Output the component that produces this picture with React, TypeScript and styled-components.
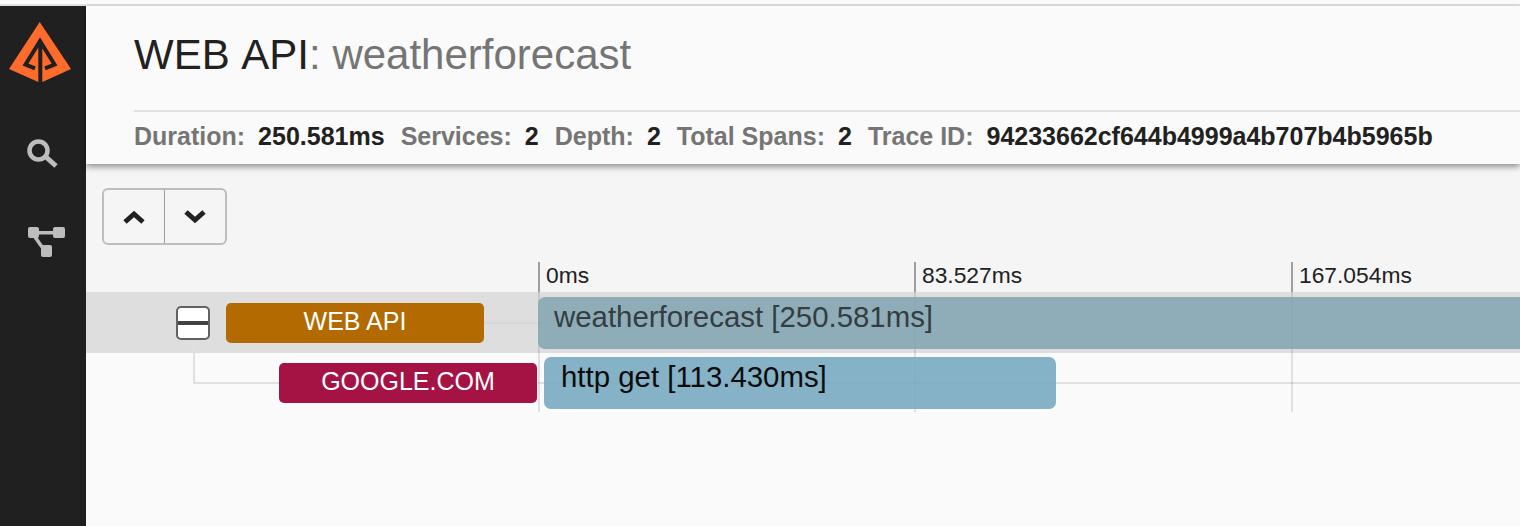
import React from 'react';
import styled, { createGlobalStyle } from 'styled-components';

const GlobalStyle = createGlobalStyle`
  html, body {
    margin: 0;
    padding: 0;
    height: 100%;
    overflow: hidden;
    background: #fafafa;
    font-family: "Liberation Sans", Arial, sans-serif;
  }
  #root {
    height: 100%;
  }
`;

const Page = styled.div`
  height: 526px;
  padding-top: 4px;
  box-sizing: border-box;
  display: flex;
  flex-direction: column;
  overflow: hidden;
`;

const Frame = styled.div`
  flex: 1;
  display: flex;
  min-height: 0;
  border-top: 2px solid #e0e0e0;
`;

const Sidebar = styled.nav`
  width: 86px;
  flex-shrink: 0;
  background: #202020;
  display: flex;
  flex-direction: column;
  align-items: center;
  gap: 46px;
  color: #bdbdbd;
`;

const LogoIcon = styled.svg`
  display: block;
  width: 62px;
  height: 62px;
  margin-top: 16px;
  margin-left: -6px;
`;

const NavIcon = styled.svg`
  display: block;
  width: 44px;
  height: 44px;
`;

const Main = styled.main`
  flex: 1;
  min-width: 0;
  display: flex;
  flex-direction: column;
`;

const Header = styled.header`
  height: 158px;
  box-sizing: border-box;
  padding: 26px 0 0 48px;
  background: #fafafa;
  box-shadow: 0 3px 6px rgba(0, 0, 0, 0.4);
  position: relative;
  z-index: 3;
`;

const Title = styled.h1`
  margin: 0;
  font-size: 42px;
  line-height: 46px;
  font-weight: 400;
  color: #757575;
  white-space: nowrap;
`;

const ServiceName = styled.span`
  color: #212121;
  font-kerning: none;
`;

const Stats = styled.div`
  margin-top: 32px;
  padding-top: 11px;
  border-top: 2px solid #e0e0e0;
  display: flex;
  align-items: baseline;
  font-size: 25px;
  line-height: 26px;
  font-weight: 700;
  white-space: nowrap;
`;

const StatLabel = styled.span`
  color: #757575;
  margin-right: 13px;
`;

const StatValue = styled.span`
  color: #212121;
  margin-right: 16px;
`;

const Content = styled.section`
  background: #f5f5f5;
  padding-top: 24px;
  height: 128px;
  box-sizing: border-box;
  display: flex;
  flex-direction: column;
`;

const ButtonGroup = styled.div`
  margin-left: 16px;
  width: 125px;
  height: 57px;
  box-sizing: border-box;
  display: flex;
  border: 2px solid #bdbdbd;
  border-radius: 6px;
`;

const CollapseButton = styled.button`
  flex: 1;
  padding: 0;
  border: 0;
  background: transparent;
  color: #212121;
  display: flex;
  align-items: center;
  justify-content: center;
  & + & {
    border-left: 1px solid #9e9e9e;
  }
`;

const Chevron = styled.svg`
  width: 22px;
  height: 14px;
  display: block;
`;

const TickRow = styled.div`
  margin-top: 17px;
  height: 30px;
  margin-left: 452px;
  display: grid;
  grid-template-columns: 376px 377px 376px;
`;

const Tick = styled.div`
  border-left: 2px solid #9e9e9e;
  box-sizing: border-box;
  padding-left: 6px;
  font-size: 22.8px;
  line-height: 26px;
  color: #212121;
`;

const Rows = styled.div`
  position: relative;
  flex: 1;
  background: #fafafa;
`;

const GridLines = styled.div`
  position: absolute;
  top: 0;
  left: 452px;
  height: 120px;
  display: grid;
  grid-template-columns: 376px 377px 376px;
  z-index: 1;
  pointer-events: none;
`;

const GridLine = styled.div`
  border-left: 2px solid rgba(0, 0, 0, 0.1);
`;

const Row = styled.div<{ $selected?: boolean; $height: number }>`
  position: relative;
  height: ${({ $height }) => $height}px;
  display: grid;
  grid-template-columns: 452px 1fr;
  background: ${({ $selected }) => ($selected ? '#dedede' : 'transparent')};
`;

const LabelCell = styled.div<{ $pad: number; $top: number }>`
  display: flex;
  align-items: flex-start;
  justify-content: flex-end;
  padding-top: ${({ $top }) => $top}px;
  padding-right: ${({ $pad }) => $pad}px;
`;

const Toggle = styled.div`
  width: 34px;
  height: 34px;
  box-sizing: border-box;
  margin: 3px 16px 0 0;
  border: 2px solid #616161;
  border-radius: 5px;
  background: #fff;
  display: flex;
  align-items: center;
  position: relative;
  z-index: 2;
  &::after {
    content: '';
    display: block;
    width: 100%;
    height: 4px;
    background: #424242;
  }
`;

const ServiceBadge = styled.div<{ $color: string }>`
  width: 258px;
  height: 40px;
  border-radius: 5px;
  background: ${({ $color }) => $color};
  color: #fff;
  font-size: 25px;
  line-height: 37px;
  text-align: center;
  position: relative;
  z-index: 2;
`;

const BarCell = styled.div<{ $left: number; $top: number }>`
  padding-left: ${({ $left }) => $left}px;
  padding-top: ${({ $top }) => $top}px;
  min-width: 0;
  overflow: hidden;
  position: relative;
  z-index: 2;
`;

const SpanBar = styled.div<{ $color: string; $text: string; $open?: boolean; $width?: number }>`
  height: 52px;
  box-sizing: border-box;
  width: ${({ $width }) => ($width ? `${$width}px` : 'auto')};
  padding: 5px 0 0 ${({ $open }) => ($open ? 16 : 17)}px;
  border-radius: ${({ $open }) => ($open ? '7px 0 0 7px' : '7px')};
  background: ${({ $color }) => $color};
  color: ${({ $text }) => $text};
  font-size: 29.4px;
  line-height: 30px;
  white-space: nowrap;
`;

const TreeLine = styled.div`
  position: absolute;
  left: 107px;
  top: -13px;
  width: 86px;
  height: 44px;
  box-sizing: border-box;
  border-left: 2px solid #e0e0e0;
  border-bottom: 2px solid #e0e0e0;
  z-index: 1;
`;

const RowRule = styled.div<{ $top: number; $left: number; $alpha: number }>`
  position: absolute;
  left: ${({ $left }) => $left}px;
  right: 0;
  top: ${({ $top }) => $top}px;
  height: 2px;
  background: rgba(0, 0, 0, ${({ $alpha }) => $alpha});
  z-index: 1;
`;

const stats: [string, string][] = [
  ['Duration:', '250.581ms'],
  ['Services:', '2'],
  ['Depth:', '2'],
  ['Total Spans:', '2'],
  ['Trace ID:', '94233662cf644b4999a4b707b4b5965b'],
];

const ticks = ['0ms', '83.527ms', '167.054ms'];

export default function App() {
  return (
    <Page>
      <GlobalStyle />
      <Frame>
        <Sidebar>
          <LogoIcon viewBox="9 23 62 62">
            <path fill="#ff6b2d" d="M39.7 23 L71 70 L42.3 83 H38.3 L9 70 Z" />
            <path
              fill="none"
              stroke="#202020"
              strokeWidth="4"
              d="M35 69.3 L25.5 65.5 L40 42 L54.5 65.5 L45 69.3 M40.3 44 V85"
            />
          </LogoIcon>
          <NavIcon viewBox="0 0 44 44" fill="none" stroke="currentColor">
            <circle cx="17.5" cy="20.5" r="9" strokeWidth="4.5" />
            <path d="M25 27 L35 36" strokeWidth="5" />
          </NavIcon>
          <NavIcon viewBox="0 0 44 44" fill="currentColor">
            <rect x="7" y="7" width="11" height="11" rx="2" />
            <rect x="32" y="7" width="12" height="11" rx="2" />
            <rect x="20" y="25" width="11" height="12" rx="2" />
            <path d="M18 11 H32 V14.5 H18 Z" />
            <path d="M14 17 L21 27" fill="none" stroke="currentColor" strokeWidth="3.5" />
          </NavIcon>
        </Sidebar>
        <Main>
          <Header>
            <Title>
              <ServiceName>WEB API</ServiceName>: weatherforecast
            </Title>
            <Stats>
              {stats.map(([label, value]) => (
                <React.Fragment key={label}>
                  <StatLabel>{label}</StatLabel>
                  <StatValue>{value}</StatValue>
                </React.Fragment>
              ))}
            </Stats>
          </Header>
          <Content>
            <ButtonGroup>
              <CollapseButton aria-label="Collapse">
                <Chevron viewBox="0 0 22 14" fill="none" stroke="currentColor" strokeWidth="5">
                  <path d="M2 12 L11 4 L20 12" />
                </Chevron>
              </CollapseButton>
              <CollapseButton aria-label="Expand">
                <Chevron viewBox="0 0 22 14" fill="none" stroke="currentColor" strokeWidth="5">
                  <path d="M2 2 L11 10 L20 2" />
                </Chevron>
              </CollapseButton>
            </ButtonGroup>
            <TickRow>
              {ticks.map(t => (
                <Tick key={t}>{t}</Tick>
              ))}
            </TickRow>
          </Content>
          <Rows>
            <GridLines>
              <GridLine />
              <GridLine />
              <GridLine />
            </GridLines>
            <Row $selected $height={61}>
              <RowRule $left={398} $top={30} $alpha={0.03} />
              <LabelCell $pad={54} $top={11}>
                <Toggle />
                <ServiceBadge $color="#b36a00">WEB API</ServiceBadge>
              </LabelCell>
              <BarCell $left={0} $top={5}>
                <SpanBar $open $color="rgba(129, 164, 178, 0.85)" $text="#333d42">
                  weatherforecast [250.581ms]
                </SpanBar>
              </BarCell>
            </Row>
            <Row $height={59}>
              <TreeLine />
              <RowRule $left={452} $top={29} $alpha={0.1} />
              <LabelCell $pad={1} $top={10}>
                <ServiceBadge $color="#a51345">GOOGLE.COM</ServiceBadge>
              </LabelCell>
              <BarCell $left={6} $top={4}>
                <SpanBar $width={512} $color="rgba(123, 171, 193, 0.92)" $text="#0c0c0c">
                  http get [113.430ms]
                </SpanBar>
              </BarCell>
            </Row>
          </Rows>
        </Main>
      </Frame>
    </Page>
  );
}
